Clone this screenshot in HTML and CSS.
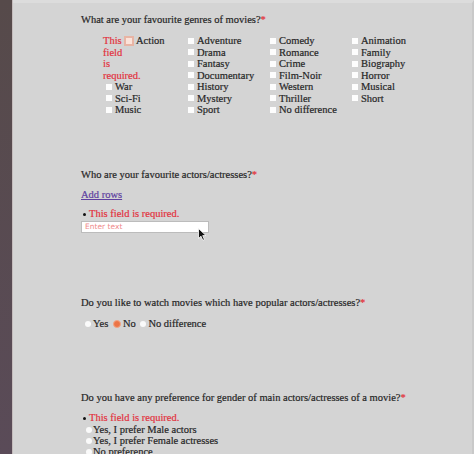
FILE: index.html
```html
<!DOCTYPE html>
<html lang="en">
<head>
  <meta charset="UTF-8">
  <title>Movie survey</title>
  <link rel="stylesheet" href="styles.css">
</head>
<body>
  <div class="sidebar"></div>
  <div class="main">
    <div class="question q-genres">
      <div class="q-title">What are your favourite genres of movies?<span class="req">*</span></div>
      <div class="genre-grid">
        <div class="genre first">
          <span class="error narrow">This field is required.</span>
          <span class="box invalid"></span>Action
        </div>
        <div class="genre"><span class="box"></span>Adventure</div>
        <div class="genre"><span class="box"></span>Comedy</div>
        <div class="genre"><span class="box"></span>Animation</div>
        <div class="genre"><span class="box"></span>Drama</div>
        <div class="genre"><span class="box"></span>Romance</div>
        <div class="genre"><span class="box"></span>Family</div>
        <div class="genre"><span class="box"></span>Fantasy</div>
        <div class="genre"><span class="box"></span>Crime</div>
        <div class="genre"><span class="box"></span>Biography</div>
        <div class="genre"><span class="box"></span>Documentary</div>
        <div class="genre"><span class="box"></span>Film-Noir</div>
        <div class="genre"><span class="box"></span>Horror</div>
        <div class="genre"><span class="box"></span>War</div>
        <div class="genre"><span class="box"></span>History</div>
        <div class="genre"><span class="box"></span>Western</div>
        <div class="genre"><span class="box"></span>Musical</div>
        <div class="genre"><span class="box"></span>Sci-Fi</div>
        <div class="genre"><span class="box"></span>Mystery</div>
        <div class="genre"><span class="box"></span>Thriller</div>
        <div class="genre"><span class="box"></span>Short</div>
        <div class="genre"><span class="box"></span>Music</div>
        <div class="genre"><span class="box"></span>Sport</div>
        <div class="genre"><span class="box"></span>No difference</div>
      </div>
    </div>

    <div class="question q-actors">
      <div class="q-title">Who are your favourite actors/actresses?<span class="req">*</span></div>
      <a href="#" class="add-rows">Add rows</a>
      <ul class="errors">
        <li class="error">This field is required.</li>
      </ul>
      <div class="input-row">
        <input type="text" class="text-input" placeholder="Enter text">
        <!-- mouse pointer -->
        <svg class="pointer" width="9" height="13" viewBox="0 0 9 13">
          <path d="M0.5 0.5 L0.5 10.5 L3 8.2 L4.8 12.3 L6.4 11.6 L4.7 7.6 L8 7.6 Z" fill="#111" stroke="#fff" stroke-width="0.8"/>
        </svg>
      </div>
    </div>

    <div class="question q-popular">
      <div class="q-title">Do you like to watch movies which have popular actors/actresses?<span class="req">*</span></div>
      <div class="radio-inline">
        <span class="radio"></span>Yes
        <span class="radio checked"></span>No
        <span class="radio"></span>No difference
      </div>
    </div>

    <div class="question q-gender">
      <div class="q-title">Do you have any preference for gender of main actors/actresses of a movie?<span class="req">*</span></div>
      <ul class="errors">
        <li class="error">This field is required.</li>
      </ul>
      <div class="radio-list">
        <div class="radio-item"><span class="radio"></span>Yes, I prefer Male actors</div>
        <div class="radio-item"><span class="radio"></span>Yes, I prefer Female actresses</div>
        <div class="radio-item"><span class="radio"></span>No preference</div>
      </div>
    </div>
  </div>
</body>
</html>
```

FILE: styles.css
```css
html, body {
  height: 100%;
}
body {
  margin: 0;
  display: flex;
  font-family: 'Liberation Serif', serif;
  font-size: 10.5px;
  line-height: 11.5px;
  color: #262626;
  -webkit-text-stroke: 0.2px currentColor;
  overflow: hidden;
}
.sidebar {
  width: 12px;
  flex-shrink: 0;
  background: linear-gradient(#564a4a, #5a4b58);
  border-right: 1px solid #c4bcbc;
}
.main {
  flex: 1;
  background-color: #d4d4d4;
  border-top: 3px solid #dcdcdc;
  border-right: 2px solid #c9c9c9;
  padding: 11px 0 0 68px;
}
.q-title {
  line-height: 12px;
}
.req {
  color: #e23a44;
}
.error {
  color: #e2323e;
}
.genre-grid {
  display: grid;
  grid-template-columns: repeat(4, 82px);
  grid-auto-rows: 11.5px;
  margin: 9px 0 0 22px;
}
.genre {
  display: flex;
  align-items: center;
  white-space: nowrap;
}
.genre.first {
  grid-row: span 4;
  align-items: flex-start;
}
.narrow {
  width: 19px;
  white-space: normal;
  flex-shrink: 0;
}
.box {
  display: inline-block;
  flex-shrink: 0;
  width: 6px;
  height: 6px;
  background: #fdfdfd;
  margin: 0 3px 0 3px;
}
.box.invalid {
  margin: 3px 4px 0 4px;
  background: #fbe3da;
  outline: 2px solid #e8b4a4;
}
.q-actors {
  margin-top: 53px;
}
.add-rows {
  display: block;
  width: fit-content;
  margin-top: 8px;
  line-height: 12px;
  color: #5e3fa0;
}
.errors {
  margin: 7px 0 0 0;
  padding-left: 8px;
  list-style: none;
}
.errors li {
  position: relative;
  line-height: 12px;
}
.errors li::before {
  content: '';
  position: absolute;
  left: -6px;
  top: 5px;
  width: 3px;
  height: 3px;
  border-radius: 50%;
  background: #111;
}
.input-row {
  position: relative;
  margin-top: 1px;
  width: 128px;
}
.text-input {
  display: block;
  box-sizing: border-box;
  width: 128px;
  height: 12px;
  margin: 0;
  padding: 0 3px;
  border: 1px solid #bcbcbc;
  background: #fff;
  font-family: 'DejaVu Sans', sans-serif;
  font-size: 7.5px;
  outline: none;
  -webkit-text-stroke: 0;
}
.text-input::placeholder {
  color: #ef8a8a;
}
.pointer {
  position: absolute;
  left: 117px;
  top: 7px;
}
.q-popular {
  margin-top: 64px;
}
.radio-inline {
  margin-top: 9px;
  line-height: 12px;
  padding-left: 2px;
}
.radio {
  display: inline-block;
  width: 6px;
  height: 6px;
  border-radius: 50%;
  background: #fafafa;
  margin-right: 1px;
  vertical-align: 0;
}
.radio-inline .radio {
  margin-left: 2px;
  margin-right: 2px;
}
.radio-inline .radio.checked {
  width: 6px;
  height: 6px;
  background: #ec7446;
  border: 1px solid #f2a585;
  margin-left: 2px;
  vertical-align: -1px;
}
.q-gender {
  margin-top: 62px;
}
.q-gender .errors {
  margin-top: 8px;
}
.radio-list {
  padding-left: 5px;
}
.radio-item {
  line-height: 11px;
  white-space: nowrap;
}
```
